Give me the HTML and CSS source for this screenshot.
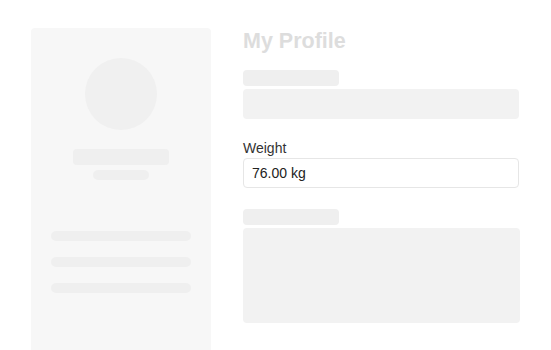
FILE: index.html
```html
<!DOCTYPE html>
<html lang="en">
<head>
<meta charset="utf-8">
<title>My Profile</title>
<link rel="stylesheet" href="styles.css">
</head>
<body>
<div class="page">
  <aside class="sidebar">
    <div class="avatar"></div>
    <div class="sk sk-name"></div>
    <div class="sk sk-sub"></div>
    <div class="nav">
      <div class="sk sk-line"></div>
      <div class="sk sk-line"></div>
      <div class="sk sk-line"></div>
    </div>
  </aside>
  <main class="main">
    <h1 class="title">My Profile</h1>
    <div class="group">
      <div class="sk sk-label"></div>
      <div class="sk sk-input"></div>
    </div>
    <div class="group">
      <label class="label" for="weight">Weight</label>
      <input class="input" id="weight" type="text" value="76.00 kg">
    </div>
    <div class="group">
      <div class="sk sk-label"></div>
      <div class="sk sk-area"></div>
    </div>
  </main>
</div>
</body>
</html>
```
FILE: styles.css
```css
html, body {
  margin: 0;
  padding: 0;
  background: #ffffff;
  overflow: hidden;
}
body {
  font-family: "Liberation Sans", Arial, sans-serif;
  color: #333333;
}
.page {
  display: flex;
  align-items: flex-start;
  gap: 32px;
  padding: 28px 0 0 31px;
}
.sidebar {
  width: 180px;
  height: 330px;
  flex: none;
  background: #f7f7f7;
  border-radius: 4px;
  display: flex;
  flex-direction: column;
  align-items: center;
  padding-top: 30px;
  box-sizing: border-box;
}
.sk {
  background: #efefef;
  border-radius: 4px;
}
.avatar {
  width: 72px;
  height: 72px;
  border-radius: 50%;
  background: #f0f0f0;
}
.sk-name {
  width: 96px;
  height: 16px;
  margin-top: 19px;
}
.sk-sub {
  width: 56px;
  height: 10px;
  margin-top: 5px;
  border-radius: 5px;
}
.nav {
  margin-top: 51px;
  display: flex;
  flex-direction: column;
  gap: 16px;
}
.sk-line {
  width: 140px;
  height: 10px;
  border-radius: 5px;
}
.main {
  width: 276px;
  flex: none;
}
.title {
  margin: 0 0 16px;
  font-size: 21.5px;
  line-height: 26px;
  font-weight: bold;
  color: #dddddd;
}
.group {
  display: flex;
  flex-direction: column;
  margin-bottom: 21px;
}
.sk-label {
  width: 96px;
  height: 16px;
  margin-bottom: 3px;
}
.sk-input {
  width: 276px;
  height: 30px;
  background: #f2f2f2;
}
.sk-area {
  width: 277px;
  height: 95px;
  background: #f2f2f2;
}
.label {
  font-size: 14px;
  line-height: 16px;
  color: #333333;
  margin-bottom: 2px;
}
.input {
  box-sizing: border-box;
  width: 276px;
  height: 30px;
  margin: 0;
  padding: 0 8px;
  border: 1px solid #e6e6e6;
  border-radius: 4px;
  font-family: "Liberation Sans", Arial, sans-serif;
  font-size: 14px;
  color: #222222;
  background: #ffffff;
  outline: none;
}
```
